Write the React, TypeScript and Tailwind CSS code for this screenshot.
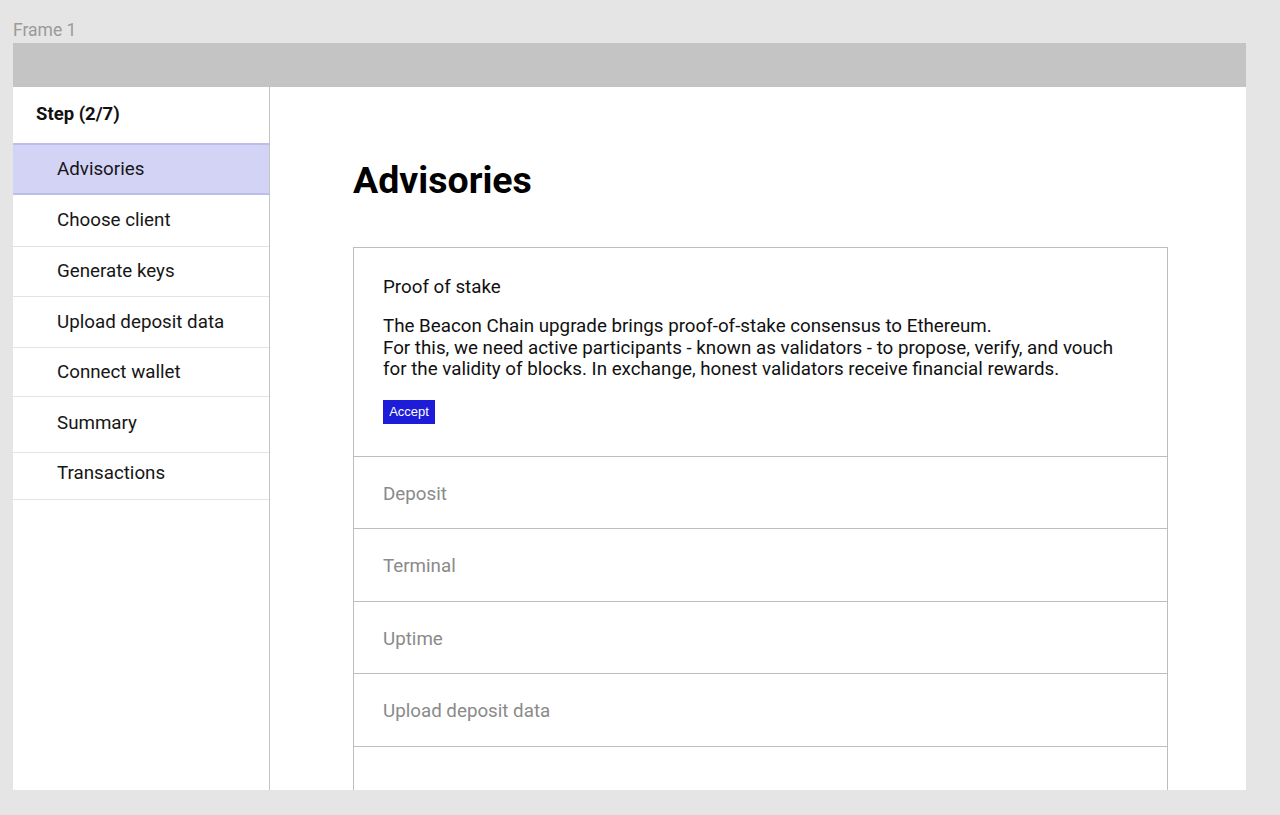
import React from 'react';

const steps = [
  { label: 'Advisories', h: 'h-[52px]', active: true },
  { label: 'Choose client', h: 'h-[52px]' },
  { label: 'Generate keys', h: 'h-[50px]' },
  { label: 'Upload deposit data', h: 'h-[51px]' },
  { label: 'Connect wallet', h: 'h-[49px]' },
  { label: 'Summary', h: 'h-[56px] pb-[2px]' },
  { label: 'Transactions', h: 'h-[47px] pb-[5px]' },
];

const collapsed = ['Deposit', 'Terminal', 'Uptime', 'Upload deposit data'];

const App = () => {
  return (
    <div className="w-[1280px] h-[815px] bg-[#e5e5e5] font-['Roboto',sans-serif] overflow-hidden">
      <div className="pl-[13px] pt-[19px] h-[43px] text-[17.5px] leading-[22px] text-[#9a9a9a]">Frame 1</div>

      {/* Frame */}
      <div className="ml-[13px] w-[1233px] h-[747px] bg-white flex flex-col overflow-hidden">
        <div className="h-[44px] shrink-0 bg-[#c4c4c4]" />

        <div className="flex flex-1 min-h-0">
          {/* Sidebar */}
          <aside className="w-[257px] shrink-0 border-r border-[#c4c4c4] flex flex-col">
            <div className="h-[56px] flex items-center pl-[23px] text-[18.5px] font-bold text-[#111]">Step (2/7)</div>
            {steps.map((s) => (
              <div
                key={s.label}
                className={`${s.h} flex items-center pl-[44px] text-[18.75px] text-[#161616] ${
                  s.active
                    ? 'bg-[#d3d3f6] border-y-2 border-[#bdbdea]'
                    : 'border-b border-[#e2e2e2]'
                }`}
              >
                {s.label}
              </div>
            ))}
          </aside>

          {/* Main */}
          <main className="flex-1 pl-[83px] pr-[78px] pt-[71px]">
            <h1 className="text-[37.5px] leading-[44px] font-bold text-black">Advisories</h1>

            <div className="mt-[45px] border border-[#bdbdbd]">
              <div className="pl-[29px] pr-[30px] pt-[28px] pb-[32px] border-b border-[#bdbdbd]">
                <div className="text-[18.75px] leading-[22px] text-[#111]">Proof of stake</div>
                <p className="mt-[18px] text-[18.75px] leading-[21.5px] text-[#111]">
                  The Beacon Chain upgrade brings proof-of-stake consensus to Ethereum.
                  <br />
                  For this, we need active participants - known as validators - to propose, verify, and vouch
                  <br />
                  for the validity of blocks. In exchange, honest validators receive financial rewards.
                </p>
                <button className="mt-[19px] h-[24px] w-[52px] bg-[#1c1cd9] text-white text-[13px] font-['Liberation_Sans',sans-serif] flex items-center justify-center">
                  Accept
                </button>
              </div>

              {collapsed.map((c) => (
                <div
                  key={c}
                  className="h-[72.5px] pt-[3px] flex items-center pl-[29px] text-[18.75px] text-[#8a8a8a] border-b border-[#bdbdbd]"
                >
                  {c}
                </div>
              ))}
              <div className="h-[73px]" />
            </div>
          </main>
        </div>
      </div>
    </div>
  );
};

export default App;
